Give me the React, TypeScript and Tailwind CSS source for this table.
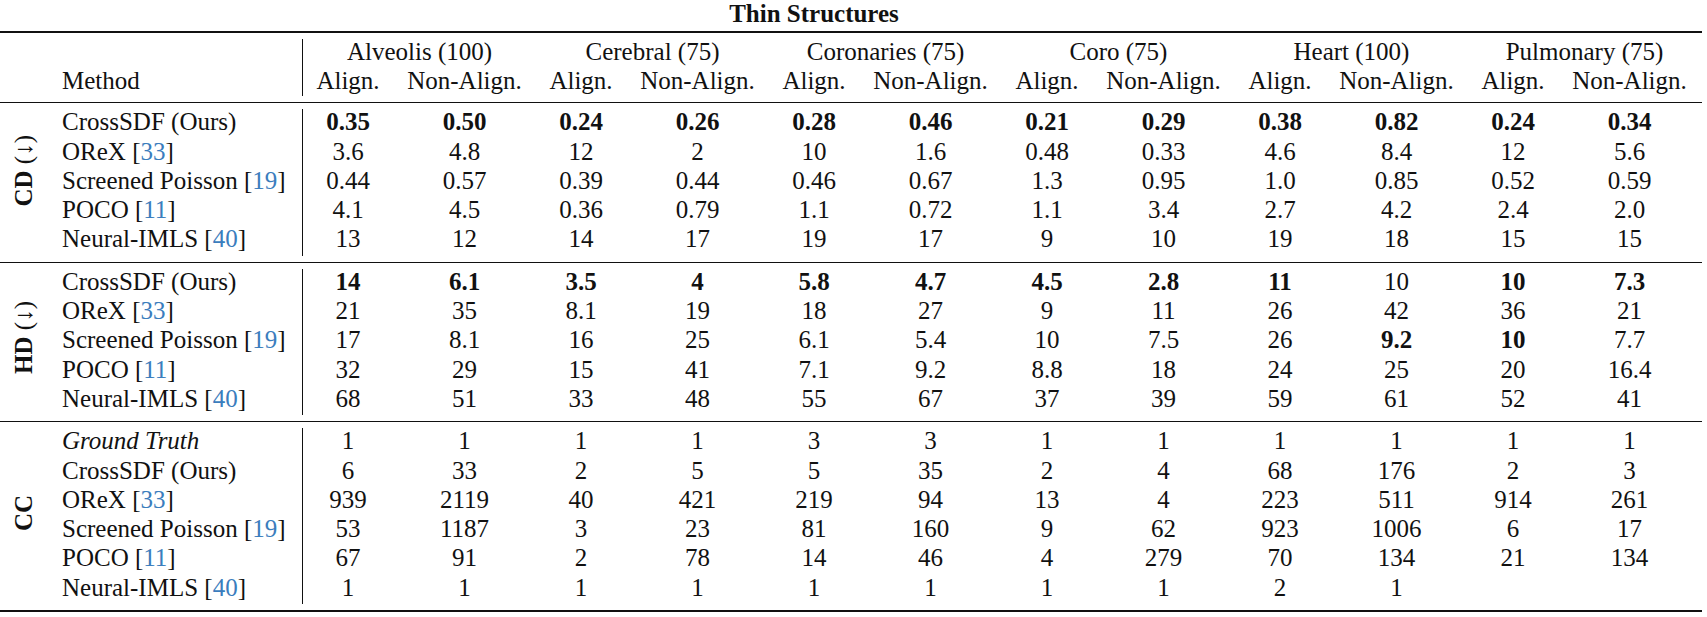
import React from "react";

type Row = { method: React.ReactNode; cells: string[] };
type Block = { label: React.ReactNode; shift: string; rows: Row[] };

const cite = (name: string, n: number) => (
  <>
    {name} [<span className="text-[#3b7dbd]">{n}</span>]
  </>
);

const groups = [
  "Alveolis (100)",
  "Cerebral (75)",
  "Coronaries (75)",
  "Coro (75)",
  "Heart (100)",
  "Pulmonary (75)",
];

// "*" in front of a value marks it bold (best result)
const blocks: Block[] = [
  {
    label: (
      <>
        <b>CD</b> (↓)
      </>
    ),
    shift: "-translate-x-[1px] -translate-y-[12px]",
    rows: [
      {
        method: "CrossSDF (Ours)",
        cells: ["*0.35", "*0.50", "*0.24", "*0.26", "*0.28", "*0.46", "*0.21", "*0.29", "*0.38", "*0.82", "*0.24", "*0.34"],
      },
      { method: cite("OReX", 33), cells: ["3.6", "4.8", "12", "2", "10", "1.6", "0.48", "0.33", "4.6", "8.4", "12", "5.6"] },
      {
        method: cite("Screened Poisson", 19),
        cells: ["0.44", "0.57", "0.39", "0.44", "0.46", "0.67", "1.3", "0.95", "1.0", "0.85", "0.52", "0.59"],
      },
      { method: cite("POCO", 11), cells: ["4.1", "4.5", "0.36", "0.79", "1.1", "0.72", "1.1", "3.4", "2.7", "4.2", "2.4", "2.0"] },
      { method: cite("Neural-IMLS", 40), cells: ["13", "12", "14", "17", "19", "17", "9", "10", "19", "18", "15", "15"] },
    ],
  },
  {
    label: (
      <>
        <b>HD</b> (↓)
      </>
    ),
    shift: "-translate-x-[1px] -translate-y-[5px]",
    rows: [
      {
        method: "CrossSDF (Ours)",
        cells: ["*14", "*6.1", "*3.5", "*4", "*5.8", "*4.7", "*4.5", "*2.8", "*11", "10", "*10", "*7.3"],
      },
      { method: cite("OReX", 33), cells: ["21", "35", "8.1", "19", "18", "27", "9", "11", "26", "42", "36", "21"] },
      { method: cite("Screened Poisson", 19), cells: ["17", "8.1", "16", "25", "6.1", "5.4", "10", "7.5", "26", "*9.2", "*10", "7.7"] },
      { method: cite("POCO", 11), cells: ["32", "29", "15", "41", "7.1", "9.2", "8.8", "18", "24", "25", "20", "16.4"] },
      { method: cite("Neural-IMLS", 40), cells: ["68", "51", "33", "48", "55", "67", "37", "39", "59", "61", "52", "41"] },
    ],
  },
  {
    label: <b>CC</b>,
    shift: "-translate-x-[1px] -translate-y-[3px]",
    rows: [
      { method: <i>Ground Truth</i>, cells: ["1", "1", "1", "1", "3", "3", "1", "1", "1", "1", "1", "1"] },
      { method: "CrossSDF (Ours)", cells: ["6", "33", "2", "5", "5", "35", "2", "4", "68", "176", "2", "3"] },
      { method: cite("OReX", 33), cells: ["939", "2119", "40", "421", "219", "94", "13", "4", "223", "511", "914", "261"] },
      { method: cite("Screened Poisson", 19), cells: ["53", "1187", "3", "23", "81", "160", "9", "62", "923", "1006", "6", "17"] },
      { method: cite("POCO", 11), cells: ["67", "91", "2", "78", "14", "46", "4", "279", "70", "134", "21", "134"] },
      { method: cite("Neural-IMLS", 40), cells: ["1", "1", "1", "1", "1", "1", "1", "1", "2", "1", "", ""] },
    ],
  },
];

function Divider() {
  return <div className="w-px bg-[#111] my-[6px] shrink-0" />;
}

function DataBlock({ block }: { block: Block }) {
  return (
    <div className="flex">
      <div className="w-[48px] shrink-0 flex items-center justify-center">
        <span className={`[writing-mode:vertical-rl] rotate-180 whitespace-nowrap leading-none ${block.shift}`}>
          {block.label}
        </span>
      </div>
      <div className="w-[254px] shrink-0 pl-[14px] pt-[4px] pb-[8px]">
        {block.rows.map((r, i) => (
          <div key={i} className="h-[29.3px] whitespace-nowrap">
            {r.method}
          </div>
        ))}
      </div>
      <Divider />
      <div className="grid grid-cols-[repeat(6,90px_143px)] auto-rows-[29.3px] pt-[4px] pb-[8px] content-start">
        {block.rows.map((r, i) =>
          r.cells.map((c, j) => (
            <div key={`${i}-${j}`} className={c.startsWith("*") ? "text-center font-bold" : "text-center"}>
              {c.replace("*", "")}
            </div>
          ))
        )}
      </div>
    </div>
  );
}

export default function App() {
  return (
    <div className="w-[1707px] h-[617px] bg-white text-[#111] [font-family:'Liberation_Serif',serif] text-[25px] leading-[29.3px]">
      <div className="w-[1702px]">
        <div className="h-[31px] flex justify-center pr-[74px] font-bold leading-[27px]">Thin Structures</div>
        <div className="h-[1.5px] bg-[#111]" />
        <div className="flex">
          <div className="w-[48px] shrink-0" />
          <div className="w-[254px] shrink-0 pl-[14px] pt-[4.5px] pb-[6.7px]">
            <div className="h-[29.3px]" />
            <div className="h-[29.3px]">Method</div>
          </div>
          <Divider />
          <div className="grid grid-cols-[repeat(6,90px_143px)] auto-rows-[29.3px] pt-[4.5px] pb-[6.7px]">
            {groups.map((g) => (
              <div key={g} className="col-span-2 text-center whitespace-nowrap">
                {g}
              </div>
            ))}
            {groups.map((g) => (
              <React.Fragment key={g + "-sub"}>
                <div className="text-center">Align.</div>
                <div className="text-center">Non-Align.</div>
              </React.Fragment>
            ))}
          </div>
        </div>
        <div className="h-px bg-[#111]" />
        <DataBlock block={blocks[0]} />
        <div className="h-px bg-[#111]" />
        <DataBlock block={blocks[1]} />
        <div className="h-px bg-[#111]" />
        <DataBlock block={blocks[2]} />
        <div className="h-[2.5px] bg-[#111] -mt-[0.5px]" />
      </div>
    </div>
  );
}
